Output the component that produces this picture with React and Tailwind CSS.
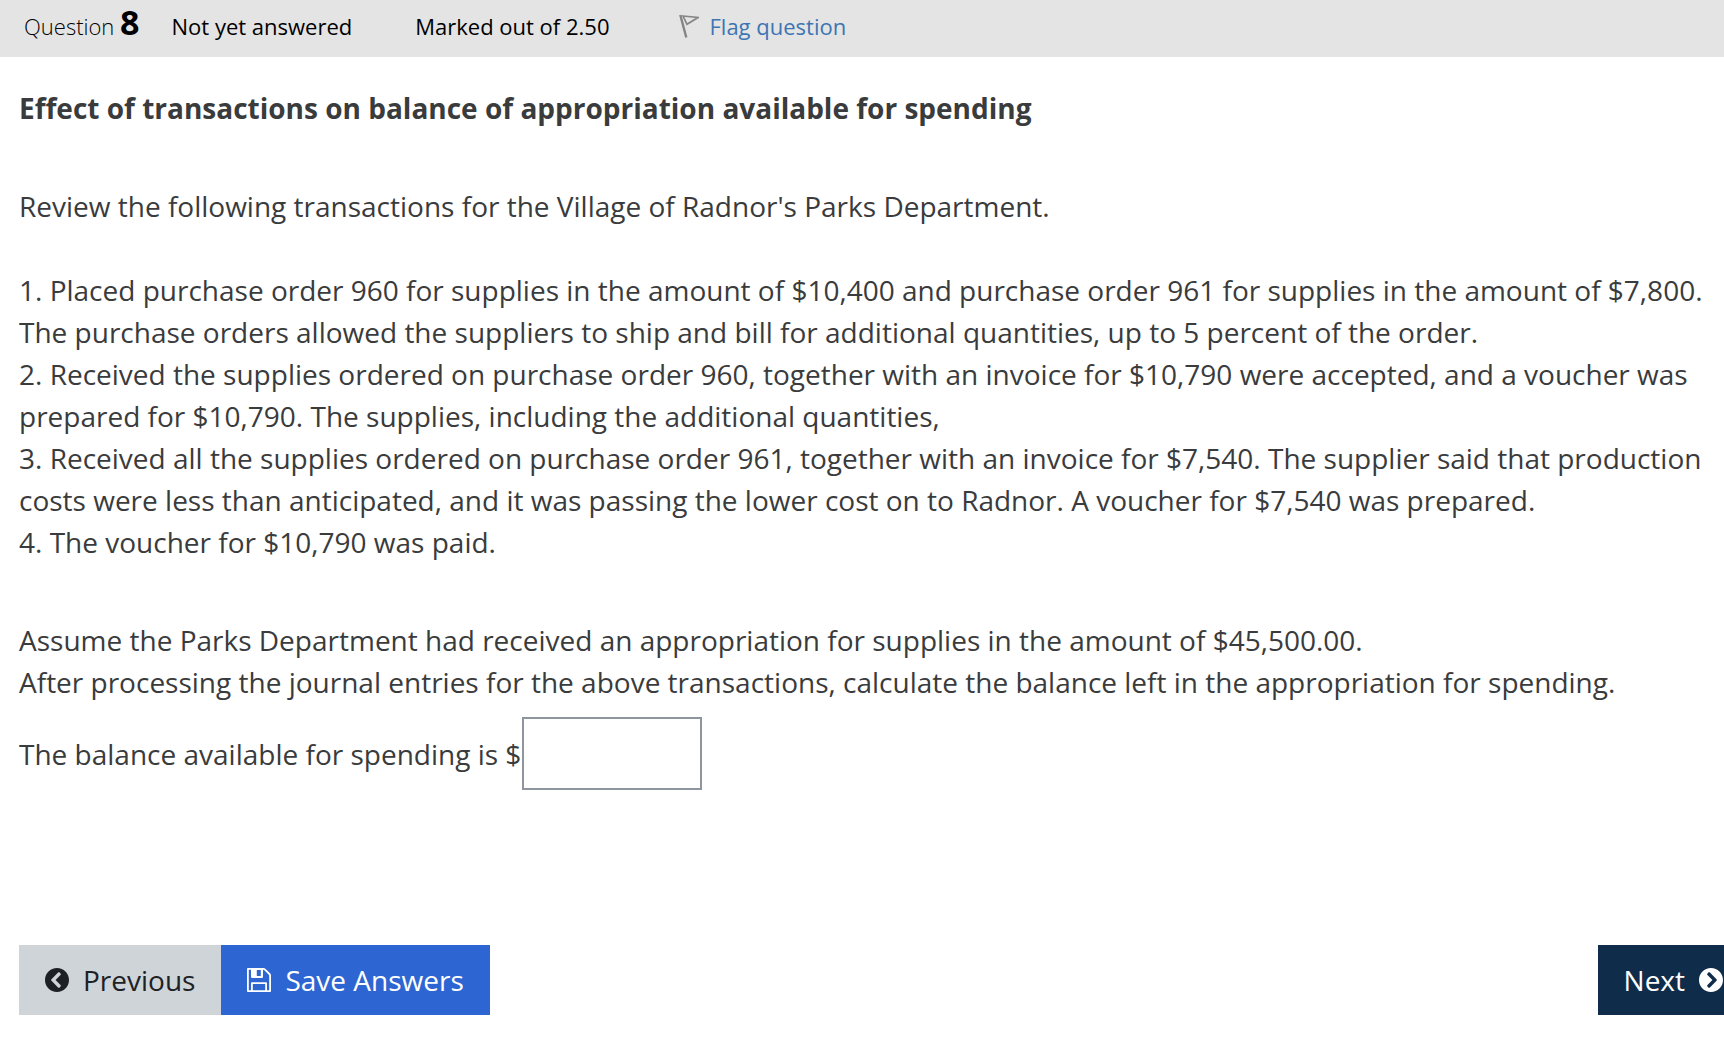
import React from "react";
import { FaChevronCircleLeft, FaChevronCircleRight } from "react-icons/fa";

const FlagIcon = () => (
  <svg className="w-5 h-6 self-center" viewBox="0 0 20 24" fill="none" stroke="#858585" aria-hidden="true">
    <path d="M1.3 1 L7.3 23.5" strokeWidth="2.4" />
    <path d="M4 2 L19 3.5 L8 10.3 Z" strokeWidth="1.7" />
  </svg>
);

const SaveIcon = () => (
  <svg
    className="w-6 h-6"
    viewBox="0 0 24 24"
    fill="none"
    stroke="currentColor"
    strokeWidth="1.8"
    strokeLinejoin="round"
    aria-hidden="true"
  >
    <path d="M0.9 0.9H16.5Q17.3 0.9 18 1.6L22.4 6Q23.1 6.7 23.1 7.5V23.1H0.9Z" />
    <path d="M4.9 23V15.2H19.1V23" />
    <path
      d="M4 1H16V8.8Q16 10 14.8 10H5.2Q4 10 4 8.8ZM9.8 2V8H13.8V2Z"
      fill="currentColor"
      fillRule="evenodd"
      stroke="none"
    />
  </svg>
);

const transactions = [
  "1. Placed purchase order 960 for supplies in the amount of $10,400 and purchase order 961 for supplies in the amount of $7,800. The purchase orders allowed the suppliers to ship and bill for additional quantities, up to 5 percent of the order.",
  "2. Received the supplies ordered on purchase order 960, together with an invoice for $10,790 were accepted, and a voucher was prepared for $10,790. The supplies, including the additional quantities,",
  "3. Received all the supplies ordered on purchase order 961, together with an invoice for $7,540. The supplier said that production costs were less than anticipated, and it was passing the lower cost on to Radnor. A voucher for $7,540 was prepared.",
  "4. The voucher for $10,790 was paid.",
];

const QuestionHeader = () => (
  <header className="flex items-baseline h-[57px] pl-6 pt-1.5 bg-[#e4e4e4] text-black text-[22px] leading-9">
    <h2 className="font-light">
      Question <span className="text-[34px] leading-8 font-bold">8</span>
    </h2>
    <div className="ml-8">Not yet answered</div>
    <div className="ml-[63px]">Marked out of 2.50</div>
    <a href="#flag" className="flex items-baseline gap-2.5 ml-[70px] text-[#3d75b3]">
      <FlagIcon />
      Flag question
    </a>
  </header>
);

const App = () => {
  return (
    <div className="bg-white text-[#3a3b3c] text-[28px] leading-[42px] font-['Open_Sans','Noto_Sans',sans-serif]">
      <QuestionHeader />

      <main className="pl-[19px] pt-[30px]">
        <h1 className="font-bold">
          Effect of transactions on balance of appropriation available for spending
        </h1>
        <p className="mt-14">
          Review the following transactions for the Village of Radnor's Parks Department.
        </p>
        <ol className="mt-[42px] pr-4">
          {transactions.map((item) => (
            <li key={item}>{item}</li>
          ))}
        </ol>
        <p className="mt-14">
          Assume the Parks Department had received an appropriation for supplies in the amount of $45,500.00.
          <br />
          After processing the journal entries for the above transactions, calculate the balance left in the
          appropriation for spending.
        </p>
        <div className="flex items-center gap-px mt-[14px]">
          <label htmlFor="balance">The balance available for spending is $</label>
          <input
            id="balance"
            type="text"
            className="w-[180px] h-[73px] px-3 border-2 border-[#8f959e] bg-white"
          />
        </div>

        {/* Navigation */}
        <div className="flex mt-[155px] pb-10">
          <button type="button" className="flex items-center gap-3.5 h-[70px] px-[26px] bg-[#ced4d8] text-[#1d2125]">
            <FaChevronCircleLeft viewBox="8 8 496 496" className="w-6 h-6" />
            Previous
          </button>
          <button type="button" className="flex items-center gap-3.5 h-[70px] px-[26px] bg-[#2d66d2] text-white">
            <SaveIcon />
            Save Answers
          </button>
          <button type="button" className="flex items-center gap-3.5 h-[70px] pl-[26px] pr-px ml-auto bg-[#0f2d4b] text-white">
            Next
            <FaChevronCircleRight viewBox="8 8 496 496" className="w-6 h-6" />
          </button>
        </div>
      </main>
    </div>
  );
};

export default App;
